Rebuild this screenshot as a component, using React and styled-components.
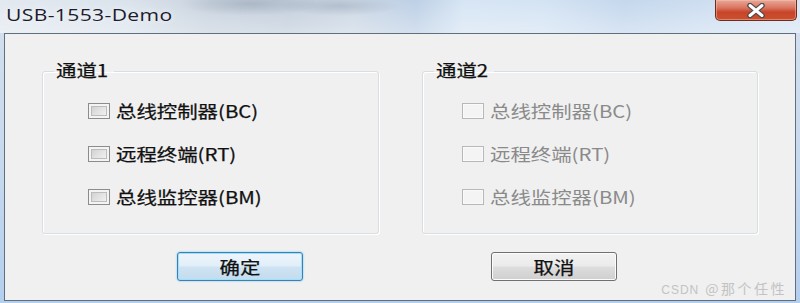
import React from 'react';
import styled, { createGlobalStyle } from 'styled-components';

const cjk = `'Noto Sans CJK SC', 'Noto Sans', sans-serif`;

const GlobalStyle = createGlobalStyle`
  html, body {
    margin: 0;
    padding: 0;
  }
  body {
    width: 800px;
    height: 303px;
    overflow: hidden;
    background: #c4d8ee;
  }
`;

const Window = styled.div`
  width: 800px;
  height: 303px;
  display: flex;
  flex-direction: column;
  background: linear-gradient(180deg, #d3e0ee 0%, #c8daee 50%, #b4cfee 100%);
`;

const TitleBar = styled.div`
  height: 33px;
  flex: none;
  display: flex;
  justify-content: space-between;
  align-items: flex-start;
  padding: 0 3px 0 6px;
  box-sizing: border-box;
  background:
    radial-gradient(ellipse 70px 12px at 250px 4px, rgba(120, 135, 155, 0.35), transparent),
    radial-gradient(ellipse 60px 10px at 340px 6px, rgba(120, 135, 155, 0.3), transparent),
    linear-gradient(180deg, rgba(255, 255, 255, 0.1) 0%, rgba(255, 255, 255, 0.4) 100%),
    linear-gradient(
      90deg,
      #dfe6ee 0%,
      #d6e0ea 16%,
      #c3cedb 26%,
      #bcc9d8 36%,
      #c6d3e2 44%,
      #b6cbe3 52%,
      #d2e2f3 58%,
      #cfe0f2 68%,
      #bed3eb 78%,
      #d2e2f3 100%
    );
`;

const Title = styled.span`
  display: inline-block;
  font-family: 'Open Sans', 'DejaVu Sans', sans-serif;
  font-size: 17px;
  line-height: 1;
  letter-spacing: 0.3px;
  color: #1c1c2c;
  padding-top: 6px;
  transform: scaleX(1.24);
  transform-origin: left center;
  text-shadow: 0 0 6px rgba(255, 255, 255, 0.9);
`;

const CloseButton = styled.div`
  width: 82px;
  height: 21px;
  box-sizing: border-box;
  display: flex;
  align-items: center;
  justify-content: center;
  border: 1px solid #6e2a1e;
  border-top: none;
  border-radius: 0 0 5px 5px;
  background: linear-gradient(180deg, #e8a99a 0%, #d9735d 40%, #c8452a 60%, #c9512f 100%);
  box-shadow: inset 0 0 0 1px rgba(255, 200, 180, 0.45);
`;

const Frame = styled.div`
  flex: 1;
  display: flex;
  padding: 0 4px 2px 4px;
`;

const Client = styled.div`
  flex: 1;
  position: relative;
  border: 1px solid #5f6f80;
  background: #f0f0f0;
  padding: 27px 37px 0 37px;
`;

const Groups = styled.div`
  display: grid;
  grid-template-columns: 337px 336px;
  column-gap: 43px;
`;

const Group = styled.fieldset`
  margin: 0;
  padding: 8px 0 15px 11px;
  min-width: 0;
  border: 1px solid #d5dfe5;
  border-radius: 3px;
  box-shadow: inset 1px 1px 0 #fff, 1px 1px 0 #fff;
`;

const Legend = styled.legend`
  width: 56px;
  padding: 0 2px;
  line-height: 18px;
`;

const Stretch = styled.span`
  display: inline-block;
  font-family: ${cjk};
  font-size: ${(p) => p.$size || 17}px;
  line-height: 1;
  font-weight: 400;
  white-space: nowrap;
  color: ${(p) => (p.$disabled ? '#8a8a8a' : '#111')};
  -webkit-text-stroke: ${(p) => (p.$disabled ? '0' : '0.25px')};
  transform: scaleX(1.2);
  transform-origin: ${(p) => (p.$center ? 'center' : 'left')} center;
`;

const CheckList = styled.div`
  display: flex;
  flex-direction: column;
  padding-left: ${(p) => p.$indent}px;
`;

const Row = styled.label`
  height: 43px;
  display: flex;
  align-items: center;
  gap: 6px;
`;

const Box = styled.span`
  width: 22px;
  height: 16px;
  box-sizing: border-box;
  flex: none;
  border: 1px solid ${(p) => (p.$disabled ? '#b8b8b8' : '#8c8c8c')};
  background: ${(p) =>
    p.$disabled
      ? '#f4f4f4'
      : 'linear-gradient(135deg, #c8c8c8 0%, #e0e0e0 45%, #f8f8f8 100%)'};
  box-shadow: ${(p) =>
    p.$disabled ? 'inset 0 0 0 1px #fafafa' : 'inset 0 0 0 2px #f4f4f4, inset 0 0 0 3px #bcbcbc'};
`;

const ButtonRow = styled.div`
  display: flex;
  gap: 188px;
  margin-top: 18px;
  padding-left: 135px;
`;

const Button = styled.button`
  width: 126px;
  height: 29px;
  box-sizing: border-box;
  padding: 0;
  border-radius: 3px;
  display: flex;
  align-items: center;
  justify-content: center;
  border: 1px solid ${(p) => (p.$primary ? '#3c7fb1' : '#707070')};
  background: ${(p) =>
    p.$primary
      ? 'linear-gradient(180deg, #eef6fc 0%, #e1eef8 48%, #cfe3f2 52%, #c3dcee 100%)'
      : 'linear-gradient(180deg, #f2f2f2 0%, #ebebeb 48%, #dddddd 52%, #cfcfcf 100%)'};
  box-shadow: ${(p) =>
    p.$primary
      ? 'inset 0 0 0 1px #9fe0fb, 0 0 2px #5fc5f0'
      : 'inset 0 0 0 1px #fcfcfc'};
`;

const Watermark = styled.span`
  position: absolute;
  right: 8px;
  bottom: 4px;
  display: flex;
  align-items: baseline;
  gap: 6px;
  font-family: ${cjk};
  font-size: 14px;
  line-height: 1;
  letter-spacing: 2.5px;
  color: #c3c3c3;
  white-space: nowrap;
`;

const Small = styled.span`
  font-family: 'Liberation Sans', sans-serif;
  font-size: 12px;
  letter-spacing: 1px;
`;

const options = [
  ['总线控制器', '(BC)'],
  ['远程终端', '(RT)'],
  ['总线监控器', '(BM)'],
];

function ChannelGroup({ title, indent, disabled }) {
  return (
    <Group>
      <Legend>
        <Stretch>{title}</Stretch>
      </Legend>
      <CheckList $indent={indent}>
        {options.map(([name, code]) => (
          <Row key={code}>
            <Box $disabled={disabled} />
            <Stretch $disabled={disabled}>
              {name}
              {code}
            </Stretch>
          </Row>
        ))}
      </CheckList>
    </Group>
  );
}

function CloseGlyph() {
  return (
    <svg width="22" height="15" viewBox="0 0 22 15">
      <path d="M5 2.5 L17 12.5 M17 2.5 L5 12.5" stroke="#4a4a4a" strokeWidth="5.5" strokeLinecap="round" />
      <path d="M5 2.5 L17 12.5 M17 2.5 L5 12.5" stroke="#ffffff" strokeWidth="3" strokeLinecap="round" />
    </svg>
  );
}

export default function App() {
  return (
    <Window>
      <GlobalStyle />
      <TitleBar>
        <Title>USB-1553-Demo</Title>
        <CloseButton>
          <CloseGlyph />
        </CloseButton>
      </TitleBar>
      <Frame>
        <Client>
          <Groups>
            <ChannelGroup title="通道1" indent={34} />
            <ChannelGroup title="通道2" indent={28} disabled />
          </Groups>
          <ButtonRow>
            <Button $primary>
              <Stretch $center>确定</Stretch>
            </Button>
            <Button>
              <Stretch $center>取消</Stretch>
            </Button>
          </ButtonRow>
          <Watermark>
            <Small>CSDN</Small>
            <span>@那个任性</span>
          </Watermark>
        </Client>
      </Frame>
    </Window>
  );
}
